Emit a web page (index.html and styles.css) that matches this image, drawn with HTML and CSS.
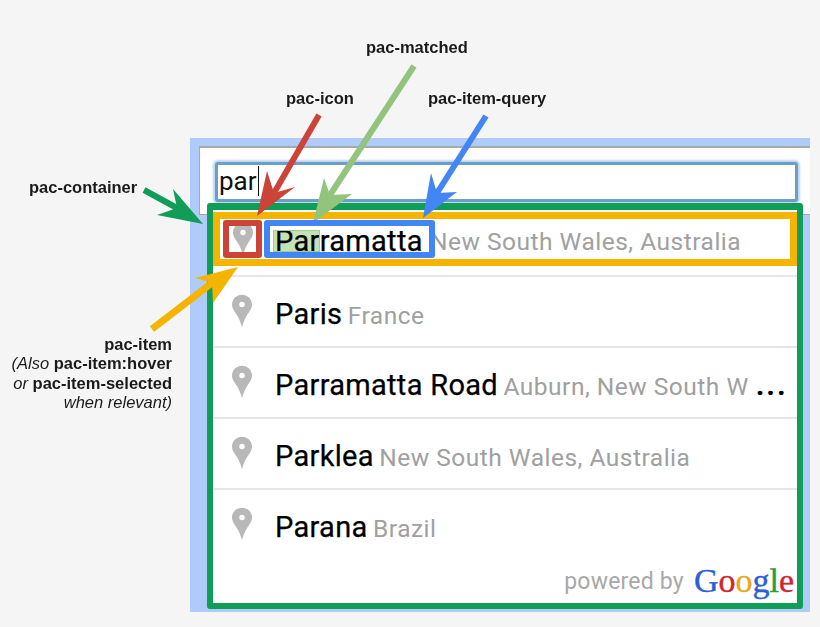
FILE: index.html
```html
<!DOCTYPE html>
<html lang="en">
<head>
    <meta charset="UTF-8">
    <meta name="viewport" content="width=device-width, initial-scale=1.0">
    <title>pac-container</title>
    <link rel="stylesheet" href="styles.css">
</head>
<body>
    <svg class="defs" width="0" height="0">
        <symbol id="pin" viewBox="0 0 22 36">
            <path fill="#b8b8b8" fill-rule="evenodd" d="M11 0C5 0 0 4.800 0 10.800C0 15.500 3 18.500 5.400 22.500C7.500 26 9.700 30.500 11 36C12.300 30.500 14.500 26 16.600 22.500C19 18.500 22 15.500 22 10.800C22 4.800 17 0 11 0ZM11 7.800A3 3 0 1 1 11 13.800A3 3 0 1 1 11 7.800Z"/>
        </symbol>
    </svg>

    <div class="stage">
        <p class="label label-matched">pac-matched</p>
        <p class="label label-icon">pac-icon</p>
        <p class="label label-query">pac-item-query</p>
        <p class="label label-container">pac-container</p>
        <p class="label label-item">pac-item<br>
            <i>(Also</i> pac-item:hover<br>
            <i>or</i> pac-item-selected<br>
            <i>when relevant)</i></p>

        <div class="panel">
            <div class="search">
                <div class="input"><span>par</span></div>
            </div>

            <div class="pac-container">
                <div class="pac-item first">
                    <span class="pac-icon"><svg class="pin"><use href="#pin"/></svg></span>
                    <span class="pac-item-query"><span class="pac-matched">Par</span>ramatta</span>
                    <span class="rest overlap">New South Wales, Australia</span>
                </div>
                <div class="pac-item">
                    <svg class="pin"><use href="#pin"/></svg>
                    <div class="text"><span class="name">Paris</span> <span class="rest">France</span></div>
                </div>
                <div class="pac-item">
                    <svg class="pin"><use href="#pin"/></svg>
                    <div class="text"><span class="name">Parramatta Road</span> <span class="rest">Auburn, New South W</span></div>
                    <span class="dots">...</span>
                </div>
                <div class="pac-item">
                    <svg class="pin"><use href="#pin"/></svg>
                    <div class="text"><span class="name">Parklea</span> <span class="rest">New South Wales, Australia</span></div>
                </div>
                <div class="pac-item">
                    <svg class="pin"><use href="#pin"/></svg>
                    <div class="text"><span class="name">Parana</span> <span class="rest">Brazil</span></div>
                </div>
                <div class="powered">
                    <span>powered by</span>
                    <span class="google"><b class="blue">G</b><b class="red">o</b><b class="yellow">o</b><b class="blue">g</b><b class="green">l</b><b class="red">e</b></span>
                </div>
            </div>
        </div>

        <svg class="arrows" width="820" height="627" viewBox="0 0 820 627">
            <g fill="#cb4437" stroke="#cb4437">
                <line x1="319" y1="115" x2="274" y2="193" stroke-width="6"/>
                <polygon stroke="none" points="257,216 267,171 274,193 295,187"/>
            </g>
            <g fill="#93c47d" stroke="#93c47d">
                <line x1="414" y1="66" x2="330" y2="195" stroke-width="6"/>
                <polygon stroke="none" points="313,223 324,178 330,195 352,194"/>
            </g>
            <g fill="#4285f4" stroke="#4285f4">
                <line x1="486" y1="116" x2="437" y2="193" stroke-width="6"/>
                <polygon stroke="none" points="423,218 431,173 437,193 457,192"/>
            </g>
            <g fill="#0f9d58" stroke="#0f9d58">
                <line x1="144" y1="190" x2="177" y2="208" stroke-width="6"/>
                <polygon stroke="none" points="203,224 173,189 177,208 157,215"/>
            </g>
            <g fill="#f4b400" stroke="#f4b400">
                <line x1="152" y1="329" x2="212" y2="283" stroke-width="7"/>
                <polygon stroke="none" points="238,267 195,278 212,283 213,303"/>
            </g>
        </svg>
    </div>
</body>
</html>
```

FILE: styles.css
```css
* {
    box-sizing: border-box;
}
html, body {
    margin: 0;
    background-color: #f5f5f5;
}
.defs {
    position: absolute;
}
.stage {
    width: 820px;
    height: 627px;
    padding: 138px 10px 15px 190px;
    position: relative;
    overflow: hidden;
    font-family: Roboto, sans-serif;
    filter: blur(0.4px);
}

/* labels and arrows */
.label {
    margin: 0;
    position: absolute;
    font: bold 16.5px/19.3px "Liberation Sans", Arial, sans-serif;
    color: #1a1a1a;
    white-space: nowrap;
}
.label i {
    font-weight: normal;
}
.label-matched { left: 366px; top: 38px; }
.label-icon { left: 286px; top: 89px; }
.label-query { left: 428px; top: 89px; }
.label-container { left: 29px; top: 178px; }
.label-item { right: 648px; top: 335px; text-align: right; }
.arrows {
    position: absolute;
    left: 0;
    top: 0;
}

/* search box */
.panel {
    height: 100%;
    padding: 8px 0 0 9px;
    position: relative;
    background-color: #aecbfa;
}
.search {
    height: 69px;
    padding: 14px 12px 0 15px;
    background-color: #fff;
    border-top: 2px solid #a9a9a9;
    border-left: 1px solid #a9a9a9;
    border-bottom: 1px solid #a9a9a9;
}
.input {
    height: 40px;
    padding-left: 1px;
    background-color: #fff;
    border: 3px solid #6d9eca;
    border-radius: 3px;
    box-shadow: 0 0 2px 2px #bdd5ef;
    font-size: 26px;
    line-height: 33px;
    color: #111;
}
.input span {
    padding-right: 1px;
    border-right: 1px solid #111;
}

/* dropdown */
.pac-container {
    position: absolute;
    left: 17px;
    top: 65px;
    width: 596px;
    height: 406px;
    display: flex;
    flex-direction: column;
    background-color: #fff;
    border: 6px solid #0f9d58;
    border-top-width: 7px;
    border-radius: 3px;
}
.pac-item {
    flex: none;
    height: 71px;
    padding: 4px 16px 0 19px;
    display: flex;
    align-items: center;
    gap: 7px;
    border-top: 2px solid #e6e6e6;
    font-size: 29px;
    letter-spacing: 0.3px;
    white-space: pre;
}
.pac-item .pin {
    margin-right: 16px;
    margin-bottom: 6px;
}
.pac-item.first {
    height: 54px;
    margin: 2px 0 9px;
    padding: 0 0 0 3px;
    gap: 0;
    border: 7px solid #f4b400;
}
.pin {
    flex: none;
    width: 20px;
    height: 34px;
}
.pac-icon {
    flex: none;
    width: 39px;
    height: 38px;
    display: flex;
    align-items: center;
    justify-content: center;
    overflow: hidden;
    background-color: #fff;
    border: 6px solid #cb4437;
    border-radius: 3px;
}
.pac-item .pac-icon .pin {
    margin: 0;
}
.pac-item-query {
    flex: none;
    width: 171px;
    height: 38px;
    margin-left: 2px;
    padding-left: 5px;
    position: relative;
    z-index: 1;
    line-height: 31px;
    color: #000;
    background-color: #fff;
    border: 6px solid #4285f4;
    border-radius: 3px;
    -webkit-text-stroke: 0.25px;
}
.pac-matched {
    display: inline-block;
    height: 22px;
    margin-left: -2px;
    padding-left: 2px;
    line-height: 22px;
    background-color: #c5e1b5;
    outline: 1px solid #9fcb8b;
    outline-offset: -1px;
}
.name {
    color: #000;
    -webkit-text-stroke: 0.25px;
}
.rest {
    font-size: 24.5px;
    letter-spacing: 0.5px;
    color: #a0a0a0;
}
.text .rest {
    margin-left: -2px;
}
.overlap {
    margin-left: -5px;
    padding-top: 5px;
}
.dots {
    margin-left: auto;
    margin-right: 15px;
    font-size: 30px;
    font-weight: bold;
    letter-spacing: 2px;
    color: #000;
}
.powered {
    flex: 1;
    padding: 0 3px 0 0;
    display: flex;
    align-items: center;
    justify-content: flex-end;
    gap: 10px;
    font-size: 23px;
    letter-spacing: 0.2px;
    color: #a8a8a8;
}
.google {
    font: 34px/36px "Liberation Serif", serif;
    letter-spacing: 0;
    -webkit-text-stroke: 0.4px;
}
.google b {
    font-weight: normal;
}
.blue { color: #2a5fd8; }
.red { color: #d2232f; }
.yellow { color: #e9a91f; }
.green { color: #2f9a3a; }
```
